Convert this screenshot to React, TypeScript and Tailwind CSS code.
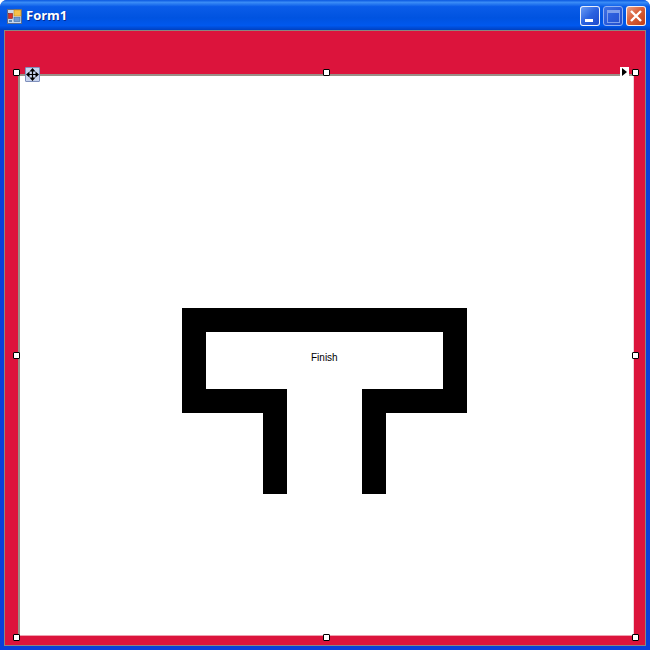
// Form1 in the designer: XP window chrome, red form, panel with the maze walls
const WALLS = [
  { x: 182, y: 308, w: 285, h: 24 },
  { x: 182, y: 308, w: 24, h: 105 },
  { x: 443, y: 308, w: 24, h: 105 },
  { x: 182, y: 389, w: 105, h: 24 },
  { x: 362, y: 389, w: 105, h: 24 },
  { x: 263, y: 389, w: 24, h: 105 },
  { x: 362, y: 389, w: 24, h: 105 },
];

const HANDLES = [
  [16, 72], [326, 72], [635, 72],
  [16, 355], [635, 355],
  [16, 637], [326, 637], [635, 637],
];

function FormIcon() {
  return (
    <svg width="15" height="15" viewBox="0 0 15 15" className="shrink-0">
      <rect x="0.5" y="0.5" width="14" height="14" fill="#c8d8ec" stroke="#5a6a8c" />
      <rect x="7" y="1" width="7" height="6" fill="#f5c24a" stroke="#c88a18" strokeWidth="0.6" />
      <rect x="1.5" y="4.5" width="4" height="5" fill="#d9302a" stroke="#8a1a14" strokeWidth="0.6" />
      <rect x="7" y="8.5" width="6" height="4" fill="#6f9cd4" stroke="#3e6aa8" strokeWidth="0.6" />
      <rect x="2" y="11" width="3" height="2" fill="#5f88b8" />
    </svg>
  );
}

function TitleButton({ kind }: { kind: 'min' | 'max' | 'close' }) {
  const bg =
    kind === 'close'
      ? 'border-white/90 bg-[linear-gradient(135deg,#e8a088_0%,#d9603a_45%,#c23c16_100%)]'
      : kind === 'min'
        ? 'border-white/90 bg-[linear-gradient(135deg,#6a9cf4_0%,#2a62e0_50%,#1c48cc_100%)]'
        : 'border-[#8fb0f4] bg-[linear-gradient(135deg,#3f72e4_0%,#2a5cdc_50%,#2450cc_100%)]';
  return (
    <div className={`w-[20px] h-[20px] rounded-[3px] border flex items-center justify-center relative ${bg}`}>
      {kind === 'min' && <div className="absolute left-[4px] bottom-[3px] w-[8px] h-[3px] bg-white" />}
      {kind === 'max' && <div className="w-[13px] h-[13px] border border-[#7fa0ec] border-t-[3px]" />}
      {kind === 'close' && (
        <svg width="14" height="14" viewBox="0 0 14 14">
          <path d="M2 2 L12 12 M12 2 L2 12" stroke="#fff" strokeWidth="2.4" />
        </svg>
      )}
    </div>
  );
}

function MoveGlyph() {
  return (
    <div className="absolute left-[25px] top-[67px] w-[15px] h-[15px] bg-[#c8d4ee] border border-[#7f90bc] rounded-[1px] flex items-center justify-center">
      <svg width="13" height="13" viewBox="0 0 13 13">
        <path d="M6.5 2 V11 M2 6.5 H11" stroke="#000" strokeWidth="1.2" />
        <path d="M6.5 0 L9.5 3.5 H3.5 Z M6.5 13 L9.5 9.5 H3.5 Z M0 6.5 L3.5 3.5 V9.5 Z M13 6.5 L9.5 3.5 V9.5 Z" fill="#000" />
      </svg>
    </div>
  );
}

export default function App() {
  return (
    <div className="relative w-[650px] h-[650px] overflow-hidden bg-white font-['Liberation_Sans',sans-serif]">
      <div className="w-full h-full flex flex-col rounded-t-[7px] overflow-hidden bg-[#0a3fd8]">
        {/* TITLE BAR */}
        <div className="h-[30px] shrink-0 flex items-center pl-[7px] pr-[4px] pt-[2px] bg-[linear-gradient(180deg,#0a58e0_0%,#3a8cf6_8%,#0a5ce8_22%,#0053e0_60%,#0058ee_85%,#0040c0_100%)]">
          <FormIcon />
          <span className="ml-[4px] text-white text-[13px] font-bold font-['Open_Sans',sans-serif] [text-shadow:1px_1px_0_#0a2a90]">Form1</span>
          <div className="ml-auto flex items-center gap-[3px]">
            <TitleButton kind="min" />
            <TitleButton kind="max" />
            <TitleButton kind="close" />
          </div>
        </div>
        {/* CLIENT */}
        <div className="flex-1 mx-[4px] mb-[4px] border border-[#8a8680] bg-[#dc143c] pt-[43px] pl-[13px] pr-[11px] pb-[9px] flex">
          <div className="flex-1 bg-white border-t-2 border-l-2 border-[#9a9088] border-r border-b border-r-[#f0d0d8] border-b-[#f0a0b0]" />
        </div>
      </div>

      {/* MAZE WALLS */}
      {WALLS.map((w, i) => (
        <div key={i} className="absolute bg-black" style={{ left: w.x, top: w.y, width: w.w, height: w.h }} />
      ))}
      <span className="absolute left-[311px] top-[351px] text-[10px] leading-[14px] text-black font-['Liberation_Sans',sans-serif]">Finish</span>

      {/* DESIGNER HANDLES */}
      {HANDLES.map(([x, y], i) => (
        <div
          key={i}
          className="absolute w-[7px] h-[7px] bg-white border border-black rounded-[1px]"
          style={{ left: x - 3, top: y - 3 }}
        />
      ))}
      <MoveGlyph />
      <div className="absolute left-[620px] top-[67px] w-[9px] h-[9px] bg-white flex items-center justify-center">
        <svg width="5" height="8" viewBox="0 0 5 8">
          <path d="M0 0 L5 4 L0 8 Z" fill="#000" />
        </svg>
      </div>
    </div>
  );
}
